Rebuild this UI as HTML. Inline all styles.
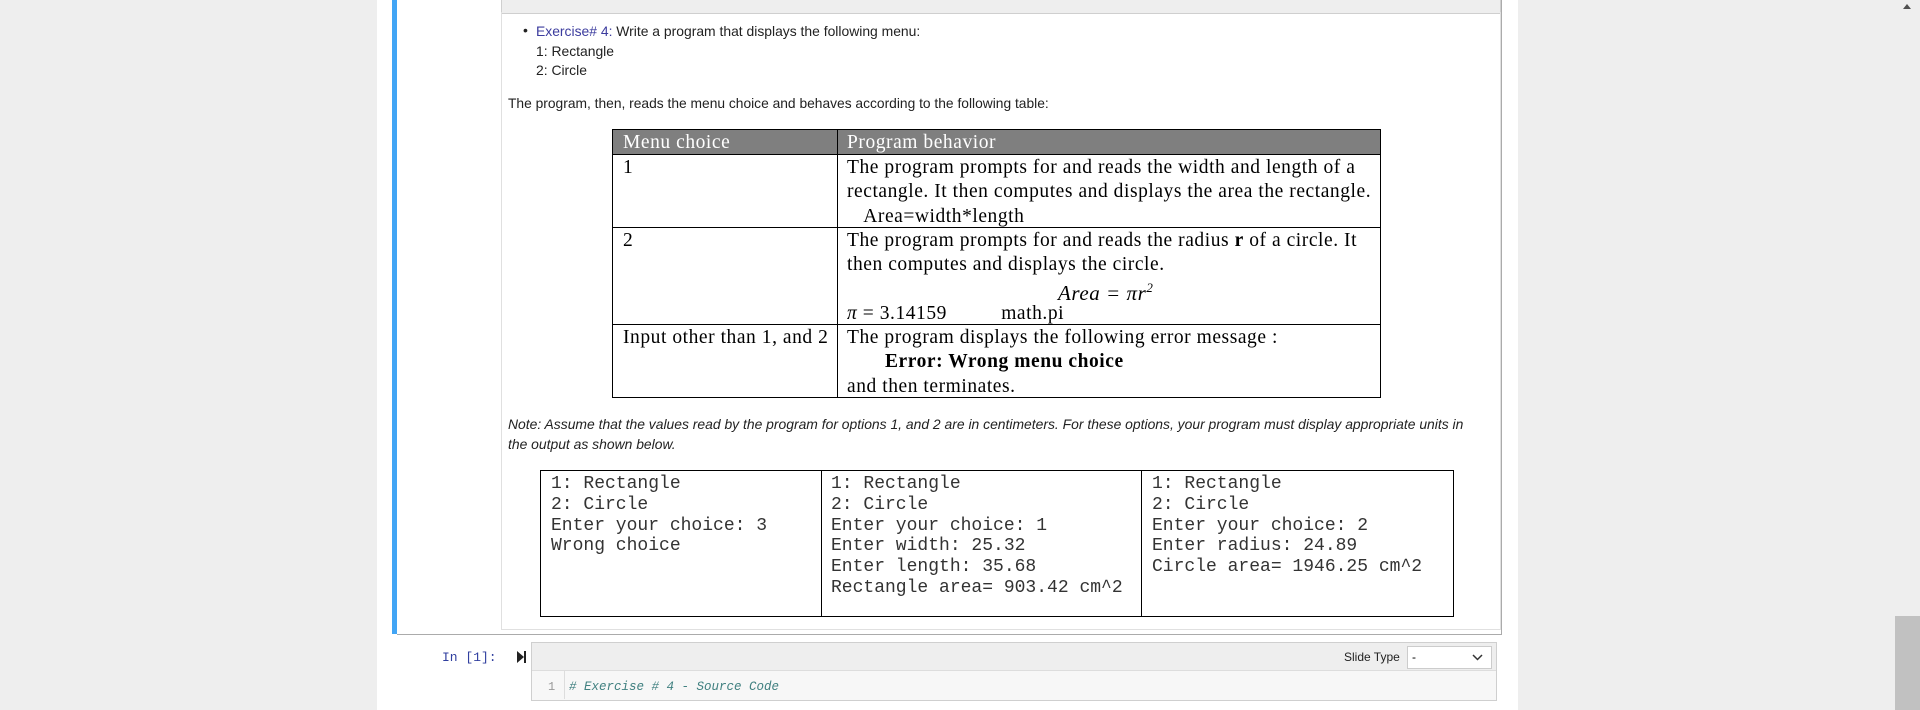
<!DOCTYPE html>
<html><head><meta charset="utf-8"><style>
body{margin:0;width:1920px;height:710px;background:#eeeeee;position:relative;overflow:hidden;font-family:"Liberation Sans",sans-serif;}
.a{position:absolute;white-space:nowrap}
.nb{position:absolute;left:377px;top:0;width:1141px;height:710px;background:#fff;}
.tm{font-family:"Liberation Serif",serif;font-size:19.5px;line-height:24.4px;letter-spacing:0.55px}
.mono{font-family:"Liberation Mono",monospace;font-size:18px;line-height:20.8px;color:#333}
</style></head><body>
<div class="nb"></div>
<div class="a" style="left:392px;top:0;width:5px;height:634px;background:#42a5f5"></div>
<div class="a" style="left:397px;top:-1px;width:1104px;height:634px;border:1px solid #ababab;border-left:none"></div>
<div class="a" style="left:501px;top:-1px;width:998px;height:13px;background:#eee;border:1px solid #cfcfcf"></div>
<div class="a" style="left:501px;top:12px;width:998px;height:617px;border:1px solid #e0e0e0;border-top:none"></div>
<div class="a" style="left:523px;top:22px;font-size:14px;color:#222">•</div>
<div class="a" style="left:536px;top:22px;font-size:13.9px;color:#222;line-height:19.7px"><span style="color:#3c3c9e">Exercise# 4:</span> Write a program that displays the following menu:<br>1: Rectangle<br>2: Circle</div>
<div class="a" style="left:508px;top:96px;font-size:13.8px;color:#222">The program, then, reads the menu choice and behaves according to the following table:</div>
<div class="a" style="left:612px;top:129px;width:767px;height:267px;border:1px solid #000"></div>
<div class="a" style="left:613px;top:130px;width:767px;height:24px;background:#7f7f7f"></div>
<div class="a" style="left:837px;top:130px;width:1px;height:267px;background:#000"></div>
<div class="a" style="left:612px;top:154px;width:768px;height:1px;background:#000"></div>
<div class="a" style="left:612px;top:227px;width:768px;height:1px;background:#000"></div>
<div class="a" style="left:612px;top:324px;width:768px;height:1px;background:#000"></div>
<div class="a tm" style="left:623px;top:131px;color:#fff">Menu choice</div>
<div class="a tm" style="left:847px;top:131px;color:#fff">Program behavior</div>
<div class="a tm" style="left:623px;top:156px">1</div>
<div class="a tm" style="left:847px;top:156px">The program prompts for and reads the width and length of a<br>rectangle. It then computes and displays the area the rectangle.<br>&nbsp;&nbsp;&nbsp;Area=width*length</div>
<div class="a tm" style="left:623px;top:229px">2</div>
<div class="a tm" style="left:847px;top:229px">The program prompts for and reads the radius <b>r</b> of a circle. It<br>then computes and displays the circle.</div>
<div class="a tm" style="left:1058px;top:276px;font-style:italic;font-size:21px">Area = πr<sup style="font-size:13px">2</sup></div>
<div class="a tm" style="left:847px;top:302px"><i>π</i> = 3.14159&nbsp;&nbsp;&nbsp;&nbsp;&nbsp;&nbsp;&nbsp;&nbsp;&nbsp;&nbsp;math.pi</div>
<div class="a tm" style="left:623px;top:326px">Input other than 1, and 2</div>
<div class="a tm" style="left:847px;top:326px">The program displays the following error message :<br>&nbsp;&nbsp;&nbsp;&nbsp;&nbsp;&nbsp;&nbsp;<b>Error: Wrong menu choice</b><br>and then terminates.</div>
<div class="a" style="left:508px;top:414px;font-size:13.9px;font-style:italic;color:#222;line-height:20px">Note: Assume that the values read by the program for options 1, and 2 are in centimeters. For these options, your program must display appropriate units in<br>the output as shown below.</div>
<div class="a" style="left:540px;top:470px;width:912px;height:145px;border:1px solid #000"></div>
<div class="a" style="left:821px;top:470px;width:1px;height:146px;background:#000"></div>
<div class="a" style="left:1141px;top:470px;width:1px;height:146px;background:#000"></div>
<div class="a mono" style="left:551px;top:474px">1: Rectangle<br>2: Circle<br>Enter your choice: 3<br>Wrong choice</div>
<div class="a mono" style="left:831px;top:474px">1: Rectangle<br>2: Circle<br>Enter your choice: 1<br>Enter width: 25.32<br>Enter length: 35.68<br>Rectangle area= 903.42 cm^2</div>
<div class="a mono" style="left:1152px;top:474px">1: Rectangle<br>2: Circle<br>Enter your choice: 2<br>Enter radius: 24.89<br>Circle area= 1946.25 cm^2</div>
<div class="a" style="left:442px;top:650px;font-family:'Liberation Mono',monospace;font-size:13px;color:#303f9f">In [1]:</div>
<div class="a" style="left:517px;top:651px;width:0;height:0;border-left:7px solid #222;border-top:6px solid transparent;border-bottom:6px solid transparent"></div>
<div class="a" style="left:524px;top:651px;width:2px;height:12px;background:#222"></div>
<div class="a" style="left:531px;top:642px;width:964px;height:57px;border:1px solid #cfcfcf;background:#f7f7f7"></div>
<div class="a" style="left:532px;top:643px;width:964px;height:27px;background:#eee;border-bottom:1px solid #ddd"></div>
<div class="a" style="left:1344px;top:650px;font-size:12px;color:#222">Slide Type</div>
<div class="a" style="left:1407px;top:646px;width:83px;height:21px;background:#fff;border:1px solid #ccc;font-size:12px"><span style="position:absolute;left:4px;top:3px">-</span><svg style="position:absolute;right:8px;top:7px" width="11" height="7"><path d="M1 1L5.5 5.5L10 1" stroke="#333" stroke-width="1.5" fill="none"/></svg></div>
<div class="a" style="left:532px;top:671px;width:32px;height:28px;border-right:1px solid #ddd"></div>
<div class="a" style="left:548px;top:680px;font-family:'Liberation Mono',monospace;font-size:12px;color:#999">1</div>
<div class="a" style="left:569px;top:680px;font-family:'Liberation Mono',monospace;font-size:12.5px;color:#408080;font-style:italic"># Exercise # 4 - Source Code</div>
<div class="a" style="left:1895px;top:616px;width:25px;height:94px;background:#c1c1c1"></div>
<div class="a" style="left:1903px;top:4px;width:0;height:0;border-bottom:5px solid #505050;border-left:4px solid transparent;border-right:4px solid transparent"></div>
</body></html>
